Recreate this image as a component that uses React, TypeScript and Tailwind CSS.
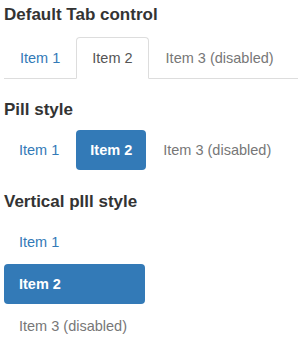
import { ReactNode } from 'react';

const font = { fontFamily: '"Liberation Sans", Arial, sans-serif' };

const Heading = ({ children, className = '' }: { children: ReactNode; className?: string }) => (
  <h4 className={`text-[17px] leading-[20px] font-bold text-[#333] ${className}`}>{children}</h4>
);

export default function App() {
  return (
    <div className="w-[307px] h-[351px] bg-white pl-1 pt-[5px] text-[14.5px]" style={font}>
      {/* Default tabs */}
      <Heading className="mb-3">Default Tab control</Heading>
      <ul className="flex w-[294px] border-b border-[#ddd]">
        <li className="-mb-px">
          <a className="block px-[15px] leading-[20px] py-[10px] border border-transparent text-[#337ab7]">Item 1</a>
        </li>
        <li className="-mb-px">
          <a className="block px-[15px] leading-[20px] py-[10px] border border-[#ddd] border-b-white rounded-t bg-white text-[#555]">Item 2</a>
        </li>
        <li className="-mb-px">
          <a className="block px-4 leading-[20px] py-[10px] border border-transparent text-[#777]">Item 3 (disabled)</a>
        </li>
      </ul>

      {/* Pills */}
      <Heading className="mt-[21px] mb-[10px]">Pill style</Heading>
      <ul className="flex gap-[2px]">
        <li>
          <a className="block px-[15px] py-[10px] leading-[20px] rounded text-[#337ab7]">Item 1</a>
        </li>
        <li>
          <a className="block px-[14px] py-[10px] leading-[20px] rounded bg-[#337ab7] text-white font-bold">Item 2</a>
        </li>
        <li>
          <a className="block px-[15px] py-[10px] leading-[20px] rounded text-[#777]">Item 3 (disabled)</a>
        </li>
      </ul>

      {/* Vertical pills */}
      <Heading className="mt-[22px] mb-[10px]">Vertical pIll style</Heading>
      <ul className="flex flex-col gap-[2px] w-[141px]">
        <li>
          <a className="block px-[15px] py-[10px] leading-[20px] rounded text-[#337ab7]">Item 1</a>
        </li>
        <li>
          <a className="block px-[15px] py-[10px] leading-[20px] rounded bg-[#337ab7] text-white font-bold">Item 2</a>
        </li>
        <li>
          <a className="block px-[15px] py-[10px] leading-[20px] rounded text-[#777]">Item 3 (disabled)</a>
        </li>
      </ul>
    </div>
  );
}
